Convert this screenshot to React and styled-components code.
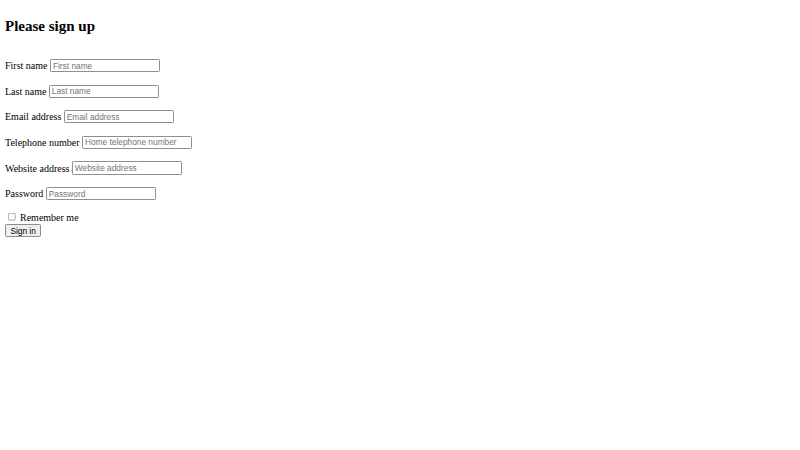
import React from "react";
import styled, { createGlobalStyle } from "styled-components";

const Global = createGlobalStyle`
  html, body { margin: 0; padding: 0; background: #fff; }
`;

// the reference is a plain 1280px page shown at 800px
const Page = styled.div`
  zoom: 0.625;
  padding: 8px;
  font-family: "Liberation Serif", "Times New Roman", serif;
  font-size: 16px;
  color: #000;
`;

const Title = styled.h2`
  font-size: 24px;
  font-weight: bold;
  margin: 21.5px 0 37.6px;
`;

const Form = styled.form`
  display: flex;
  flex-direction: column;
`;

const Row = styled.div`
  display: flex;
  align-items: center;
  gap: 4px;
  height: 21px;
  margin-bottom: 20px;
`;

const Label = styled.label`
  font-size: 16px;
`;

const Input = styled.input`
  box-sizing: border-box;
  font-family: Arial, "Liberation Sans", sans-serif;
  font-size: 13.333px;
  width: 176px;
  height: 21px;
  padding: 1px 3px;
  border: 1px solid #8f8f8f;
  border-radius: 2px;
  &::placeholder { color: #757575; }
`;

const CheckRow = styled.div`
  display: flex;
  align-items: center;
  margin-top: -3px;
  height: 21px;
`;

const Check = styled.input`
  margin: 3px 7px 3px 4px;
  width: 13px;
  height: 13px;
`;

const Button = styled.button`
  align-self: flex-start;
  box-sizing: border-box;
  height: 21px;
  font-family: Arial, "Liberation Sans", sans-serif;
  font-size: 13.333px;
  padding: 1px 7px;
  background: #efefef;
  border: 1px solid #8f8f8f;
  border-radius: 2px;
  color: #000;
`;

const fields = [
  { id: "first", label: "First name", placeholder: "First name", type: "text" },
  { id: "last", label: "Last name", placeholder: "Last name", type: "text" },
  { id: "email", label: "Email address", placeholder: "Email address", type: "email" },
  { id: "tel", label: "Telephone number", placeholder: "Home telephone number", type: "tel" },
  { id: "web", label: "Website address", placeholder: "Website address", type: "url" },
  { id: "pass", label: "Password", placeholder: "Password", type: "password" },
];

export default function App() {
  return (
    <>
      <Global />
      <Page>
        <Title>Please sign up</Title>
        <Form onSubmit={(e) => e.preventDefault()}>
          {fields.map((f) => (
            <Row key={f.id}>
              <Label htmlFor={f.id}>{f.label}</Label>
              <Input id={f.id} type={f.type} placeholder={f.placeholder} />
            </Row>
          ))}
          <CheckRow>
            <Check type="checkbox" id="remember" />
            <Label htmlFor="remember">Remember me</Label>
          </CheckRow>
          <Button type="submit">Sign in</Button>
        </Form>
      </Page>
    </>
  );
}
